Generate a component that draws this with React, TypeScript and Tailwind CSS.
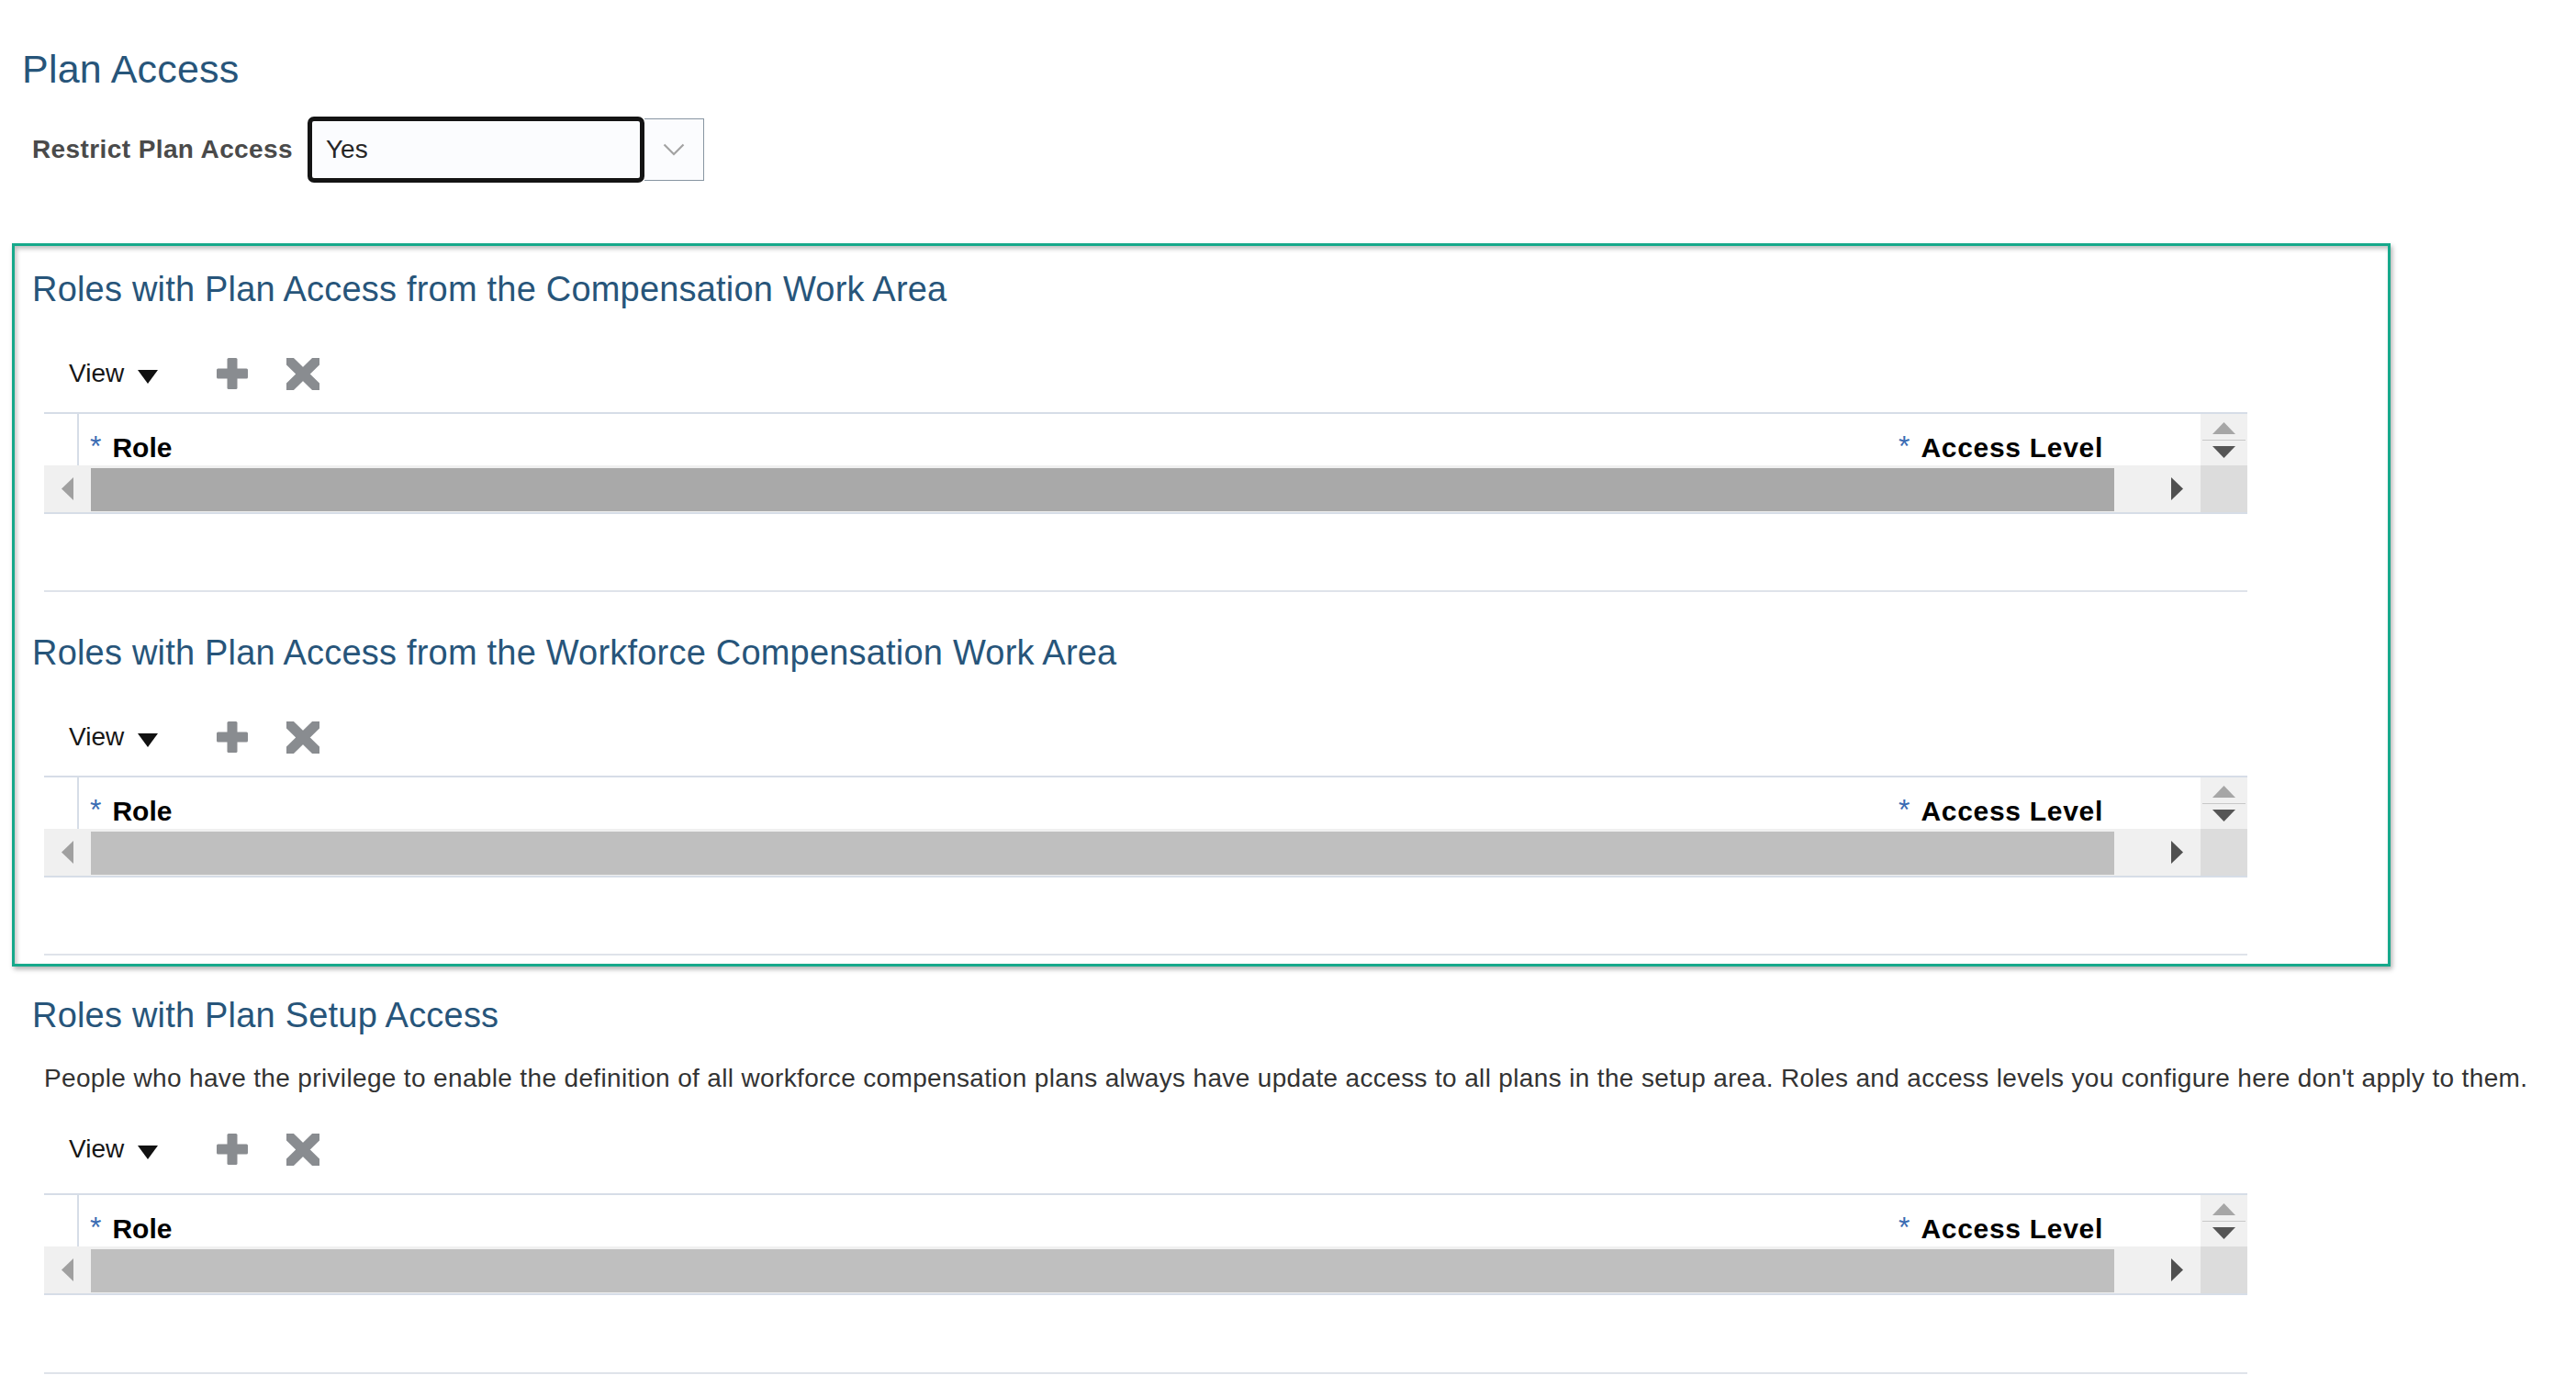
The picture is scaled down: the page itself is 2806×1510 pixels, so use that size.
import React from "react";

function PlusIcon() {
  return (
    <svg width="34" height="34" viewBox="0 0 34 34" className="ml-[64px] shrink-0">
      <rect x="11.5" y="0" width="11" height="34" rx="1.5" fill="#898c90" />
      <rect x="0" y="11.5" width="34" height="11" rx="1.5" fill="#898c90" />
    </svg>
  );
}

function RemoveIcon() {
  return (
    <svg width="36" height="35" viewBox="0 0 36 35" className="ml-[42px] shrink-0">
      <path d="M-3 -3L39 38M39 -3L-3 38" stroke="#898c90" strokeWidth="11" />
    </svg>
  );
}

function Toolbar() {
  return (
    <div className="ml-[59px] flex h-[36px] items-center">
      <span className="text-[28px] leading-none text-[#161616]">View</span>
      <svg width="22" height="15" viewBox="0 0 22 15" className="ml-[15px] mt-[7px] shrink-0">
        <polygon points="0,0 22,0 11,15" fill="#111" />
      </svg>
      <PlusIcon />
      <RemoveIcon />
    </div>
  );
}

function Req() {
  return <span className="mb-[1px] text-[32px] font-normal leading-none text-[#3a6bb3]">*</span>;
}

function Grid({ thumb }: { thumb: string }) {
  return (
    <div className="w-[2400px] border-y-2 border-[#d6dde7]">
      <div className="flex h-[56px]">
        <div className="w-[36px] shrink-0" />
        <div className="flex flex-1 items-end gap-[12px] border-l-2 border-[#d6dde7] pb-[4px] pl-[12px]">
          <Req />
          <span className="text-[30px] font-bold leading-none text-black">Role</span>
        </div>
        <div className="flex w-[342px] items-end gap-[12px] pb-[4px] pl-[13px]">
          <Req />
          <span className="text-[30px] font-bold leading-none tracking-[0.7px] text-black">Access Level</span>
        </div>
        <div className="flex w-[51px] flex-col items-center bg-[#f0f0f0] pt-[9px]">
          <svg width="25" height="13" viewBox="0 0 25 13">
            <polygon points="12.5,0 25,13 0,13" fill="#a6a6a6" />
          </svg>
          <div className="mt-[6px] h-[1px] w-[47px] bg-[#c8c8c8]" />
          <svg width="25" height="13" viewBox="0 0 25 13" className="mt-[6px]">
            <polygon points="0,0 25,0 12.5,13" fill="#555" />
          </svg>
        </div>
      </div>
      <div className="flex h-[51px] bg-[#f0f0f0]">
        <div className="flex w-[50px] items-center justify-center">
          <svg width="13" height="25" viewBox="0 0 13 25">
            <polygon points="13,0 13,25 0,12.5" fill="#a0a0a0" />
          </svg>
        </div>
        <div className={`ml-[1px] mb-[1px] mt-[3px] flex-1 ${thumb}`} />
        <div className="flex w-[94px] items-center justify-end pr-[19px]">
          <svg width="13" height="25" viewBox="0 0 13 25">
            <polygon points="0,0 13,12.5 0,25" fill="#505050" />
          </svg>
        </div>
        <div className="w-[51px] bg-[#dcdcdc]" />
      </div>
    </div>
  );
}

function Section({
  title,
  desc,
  thumb,
  toolbarGap,
  tableGap,
  sepGap,
}: {
  title: string;
  desc?: string;
  thumb: string;
  toolbarGap: string;
  tableGap: string;
  sepGap: string;
}) {
  return (
    <section>
      <h2 className="pl-[19px] text-[38px] font-normal leading-none tracking-[0.2px] text-[#27557a]">{title}</h2>
      {desc && (
        <p className="ml-[32px] mt-[36px] text-[28px] leading-none tracking-[0.35px] text-[#333]">{desc}</p>
      )}
      <div className={toolbarGap}>
        <Toolbar />
      </div>
      <div className={`ml-[32px] ${tableGap}`}>
        <Grid thumb={thumb} />
      </div>
      <div className={`ml-[32px] h-[2px] w-[2400px] bg-[#dfe3ea] ${sepGap}`} />
    </section>
  );
}

export default function App() {
  return (
    <div className="min-h-screen bg-white pt-[54px] font-['Liberation_Sans',Arial,sans-serif]">
      <h1 className="ml-[24px] text-[43px] font-normal leading-none tracking-[0.2px] text-[#27557a]">Plan Access</h1>

      <div className="ml-[35px] mt-[30px] flex items-center">
        <label className="text-[28px] font-bold leading-none tracking-[0.4px] text-[#4a4a4a]">
          Restrict Plan Access
        </label>
        <div className="ml-[16px] flex items-center">
          <div className="flex h-[72px] w-[367px] items-center rounded-[7px] border-[5px] border-[#141414] bg-[#fbfcfe] pl-[15px]">
            <span className="text-[28px] leading-none text-[#262626]">Yes</span>
          </div>
          <div className="flex h-[68px] w-[65px] items-center justify-center border-y border-r border-[#8795a2] bg-[#fbfcfe]">
            <svg width="24" height="14" viewBox="0 0 24 14">
              <polyline points="1.5,1.5 12,12 22.5,1.5" fill="none" stroke="#a3a3a3" strokeWidth="2.2" />
            </svg>
          </div>
        </div>
      </div>

      <div className="ml-[13px] mt-[66px] w-[2591px] border-[3px] border-[#16a98b] pb-[9px] pt-[28px] shadow-[2px_3px_5px_rgba(0,0,0,0.3),inset_2px_3px_5px_rgba(0,0,0,0.25)]">
        <Section
          title="Roles with Plan Access from the Compensation Work Area"
          thumb="bg-[#a9a9a9]"
          toolbarGap="mt-[55px]"
          tableGap="mt-[24px]"
          sepGap="mt-[83px]"
        />
        <div className="mt-[47px]">
          <Section
            title="Roles with Plan Access from the Workforce Compensation Work Area"
            thumb="bg-[#bfbfbf]"
            toolbarGap="mt-[55px]"
            tableGap="mt-[24px]"
            sepGap="mt-[83px]"
          />
        </div>
      </div>

      <div className="mt-[34px] pl-[16px]">
        <Section
          title="Roles with Plan Setup Access"
          desc="People who have the privilege to enable the definition of all workforce compensation plans always have update access to all plans in the setup area. Roles and access levels you configure here don't apply to them."
          thumb="bg-[#bfbfbf]"
          toolbarGap="mt-[45px]"
          tableGap="mt-[30px]"
          sepGap="mt-[84px]"
        />
      </div>
    </div>
  );
}
